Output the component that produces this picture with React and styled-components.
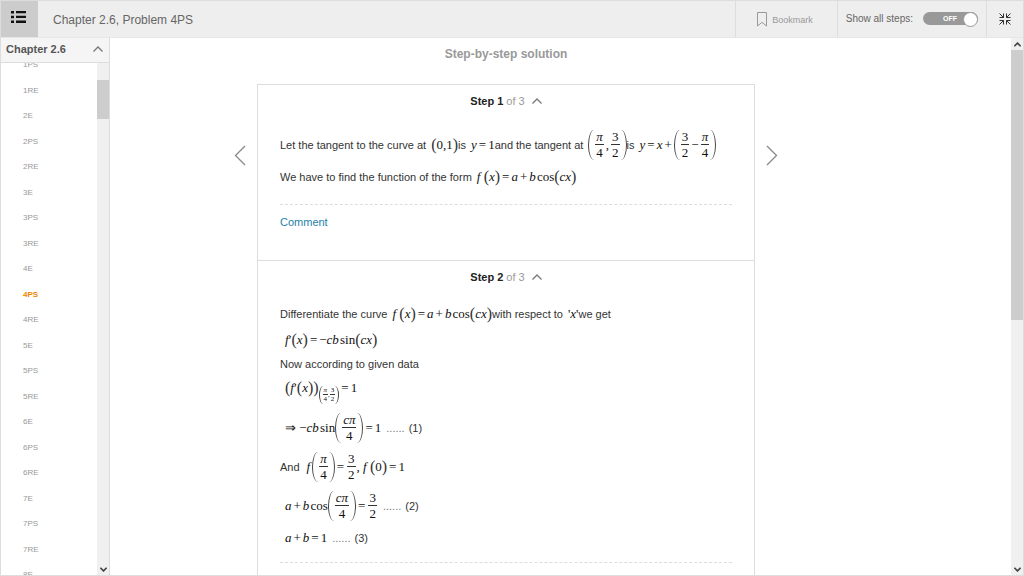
import { useState } from "react";
import styled, { createGlobalStyle, css } from "styled-components";

const GlobalStyle = createGlobalStyle`
  * {
    box-sizing: border-box;
  }

  body {
    margin: 0;
    background-color: #fff;
    color: #333;
    font-family: "Liberation Sans", Arial, sans-serif;
    font-size: 11px;
  }

  button {
    all: unset;
    box-sizing: border-box;
    cursor: pointer;
  }
`;

const Page = styled.div`
  display: flex;
  flex-direction: column;
  height: 100vh;
  overflow: hidden;
  border: 1px solid #ddd;
`;

const TopBar = styled.header`
  display: flex;
  flex: none;
  height: 37px;
  background-color: #eee;
  border-bottom: 1px solid #e6e6e6;
`;

const MenuButton = styled.button`
  display: flex;
  justify-content: center;
  width: 37px;
  padding: 10px 2px 0 0;
  background-color: #ccc;
`;

const Title = styled.h1`
  flex: 1;
  margin: 0;
  padding-left: 15px;
  font-size: 12px;
  font-weight: 400;
  line-height: 38px;
  color: #666;
`;

const BarCell = styled.div`
  display: flex;
  align-items: center;
  padding: 0 8px;
  border-left: 1px solid #ddd;
`;

const BookmarkButton = styled.button`
  display: flex;
  align-items: center;
  gap: 5px;
  padding: 1px 16px 0 13px;
  font-size: 9px;
  color: #999;
`;

const ToggleLabel = styled.label`
  padding-bottom: 2px;
  margin-right: 10px;
  font-size: 10px;
  color: #666;
`;

const Toggle = styled.span`
  position: relative;
  display: flex;
  margin-bottom: 1px;

  input {
    appearance: none;
    width: 55px;
    height: 13px;
    margin: 0;
    border-radius: 7px;
    background-color: #999;
    cursor: pointer;
  }

  &::after {
    content: "";
    position: absolute;
    top: 0;
    ${(props) => (props.$on ? "left: 0;" : "right: 0;")}
    width: 13px;
    height: 13px;
    border: 1px solid #999;
    border-radius: 50%;
    background-color: #fff;
    pointer-events: none;
  }
`;

const ToggleText = styled.span`
  position: absolute;
  top: 0;
  left: 20px;
  font-size: 7px;
  font-weight: 700;
  line-height: 13px;
  color: #fff;
  pointer-events: none;
`;

const ShrinkButton = styled.button`
  display: flex;
  padding: 0 4px;
`;

const Body = styled.div`
  display: flex;
  flex: 1;
  min-height: 0;
`;

const Sidebar = styled.nav`
  display: flex;
  flex-direction: column;
  flex: none;
  width: 109px;
  border-right: 1px solid #ddd;
`;

const ChapterButton = styled.button`
  display: flex;
  flex: none;
  align-items: center;
  justify-content: space-between;
  height: 25px;
  padding: 0 6px 2px 5px;
  border-bottom: 1px solid #ddd;
  background-color: #f5f5f5;
  font-weight: 700;
  color: #555;
`;

const SidebarScroll = styled.div`
  display: flex;
  flex: 1;
  min-height: 0;
`;

const ProblemWindow = styled.div`
  flex: 1;
  overflow: hidden;
`;

const ProblemList = styled.ul`
  margin: -10px 0 0;
  padding: 0;
  list-style: none;
`;

const ProblemItem = styled.li`
  height: 25px;
  padding-left: 22px;
  font-size: 8px;
  line-height: 24px;

  &:nth-child(odd) {
    height: 26px;
  }

  a {
    color: #999;
    text-decoration: none;

    ${(props) =>
      props.$active &&
      css`
        color: #f08700;
        font-weight: 700;
      `}
  }
`;

const Track = styled.div`
  display: flex;
  flex-direction: column;
  flex: none;
  align-items: center;
  width: 12px;
  padding-top: ${(props) => props.$offset || 0}px;
  background-color: #f0f0f0;
`;

const TrackArrow = styled.button`
  display: flex;
  align-items: center;
  justify-content: center;
  width: 100%;
  height: 12px;
`;

const Thumb = styled.div`
  width: 100%;
  height: ${(props) => props.$size};
  margin-bottom: auto;
  background-color: #cdcdcd;
`;

const Main = styled.main`
  flex: 1;
  min-width: 0;
  overflow: hidden;
  padding-right: 109px;
`;

const Heading = styled.h2`
  margin: 0;
  padding-bottom: 14px;
  font-size: 12px;
  line-height: 32px;
  text-align: center;
  color: #999;
`;

const Pager = styled.div`
  display: flex;
  align-items: flex-start;
  justify-content: center;
  gap: 11px;
`;

const PageButton = styled.button`
  display: flex;
  margin-top: 61px;
`;

const Steps = styled.div`
  flex: 0 1 498px;
  border: 1px solid #ddd;
`;

const StepSection = styled.section`
  & + & {
    border-top: 1px solid #ddd;
  }
`;

const StepButton = styled.button`
  display: flex;
  align-items: center;
  justify-content: center;
  width: 100%;
  height: 32px;
  padding-bottom: 1px;
  gap: 3px;
  color: #999;

  strong {
    color: #222;
  }

  svg {
    margin-left: 4px;
  }
`;

const StepBody = styled.div`
  display: flex;
  flex-direction: column;
  gap: 4px;
  margin: 0 22px;
  padding: 10px 0 ${(props) => (props.$last ? 13 : 16)}px;
  border-bottom: 1px dashed #ddd;
`;

const rowHeights = {
  text: 18,
  math: 22,
  sub: 29,
  tall: 35,
};

const Line = styled.div`
  display: flex;
  align-items: ${(props) => (props.$kind === "sub" ? "flex-start" : "center")};
  height: ${(props) => rowHeights[props.$kind || "text"]}px;
  white-space: nowrap;
`;

const Math = styled.span`
  display: flex;
  align-items: center;
  padding-left: ${(props) => (props.$flush ? 0 : 5)}px;
  font-family: "Liberation Serif", "Times New Roman", serif;
  font-size: 13px;
  line-height: 22px;
  color: #111;
`;

const Op = styled.span`
  padding: 0 2px;
`;

const Tight = styled.span`
  padding: 0 1px;
`;

const Round = styled.span`
  display: flex;
  align-items: center;

  &::before,
  &::after {
    font-size: 16px;
    color: #333;
  }

  &::before {
    content: "(";
  }

  &::after {
    content: ")";
  }
`;

// fences that stretch around a fraction
const TallRound = styled.span`
  display: flex;
  align-items: center;
  align-self: center;
  height: ${(props) => (props.$small ? 18 : 30)}px;
  line-height: 1;

  &::before,
  &::after {
    content: "";
    align-self: stretch;
    width: ${(props) => (props.$small ? 3 : 5)}px;
    border: 0 solid #444;
  }

  &::before {
    border-left-width: 1px;
    border-radius: 100% 0 0 100% / 50%;
  }

  &::after {
    border-right-width: 1px;
    border-radius: 0 100% 100% 0 / 50%;
  }
`;

const Fraction = styled.span`
  display: inline-flex;
  flex-direction: column;
  align-items: center;
  margin: 0 1px;
  line-height: 14px;

  span {
    padding: 0 1px;
  }

  span + span {
    border-top: 1px solid #333;
    padding-top: 1px;
    min-width: 100%;
    text-align: center;
  }
`;

const Subscript = styled.span`
  display: flex;
  padding-top: 9px;
  font-size: 7px;

  ${Fraction} {
    margin: 0;
    line-height: 7px;
  }
`;

const Note = styled.span`
  display: flex;
  gap: 4px;
  padding-left: 5px;
`;

const Dots = styled.span`
  color: #777;
`;

const CommentLink = styled.a`
  display: block;
  height: 55px;
  margin: 0 22px;
  line-height: 34px;
  color: #1f7fa8;
  text-decoration: none;
`;

const problems = [
  "1PS", "1RE", "2E", "2PS", "2RE", "3E", "3PS", "3RE", "4E", "4PS", "4RE",
  "5E", "5PS", "5RE", "6E", "6PS", "6RE", "7E", "7PS", "7RE", "8E",
];

function Chevron({ direction = "up", width = 10, height = 6, color = "#777", stroke = 1.3 }) {
  const paths = {
    up: "M0.5 5.5 L5 1 L9.5 5.5",
    down: "M0.5 0.5 L5 5 L9.5 0.5",
  };
  return (
    <svg width={width} height={height} viewBox="0 0 10 6" fill="none" stroke={color} strokeWidth={stroke}>
      <path d={paths[direction]} />
    </svg>
  );
}

function ListIcon() {
  return (
    <svg width="15" height="12" viewBox="0 0 15 12" fill="#111">
      <path d="M0 0h3v2.5H0zM0 4.7h3v2.5H0zM0 9.5h3V12H0zM5 0h10v2.3H5zM5 4.8h10v2.3H5zM5 9.6h10v2.3H5z" />
    </svg>
  );
}

function BookmarkIcon() {
  return (
    <svg width="10" height="15" viewBox="0 0 10 15" fill="none" stroke="#999">
      <path d="M0.5 0.5h9v13.5L5 10.3L0.5 14z" />
    </svg>
  );
}

function ShrinkIcon() {
  return (
    <svg width="12" height="12" viewBox="0 0 12 12" fill="none" stroke="#333">
      <path d="M0.5 0.5L4.5 4.5M0.5 4.5h4V0.5M11.5 0.5L7.5 4.5M7.5 0.5v4h4M0.5 11.5L4.5 7.5M0.5 7.5h4v4M11.5 11.5L7.5 7.5M7.5 11.5v-4h4" />
    </svg>
  );
}

function Arrow({ direction }) {
  return (
    <svg width="12" height="21" viewBox="0 0 12 21" fill="none" stroke="#888" strokeWidth="1.3">
      <path d={direction === "left" ? "M11 1L1.5 10.5L11 20" : "M1 1L10.5 10.5L1 20"} />
    </svg>
  );
}

function Frac({ top, bottom }) {
  return (
    <Fraction>
      <span>{top}</span>
      <span>{bottom}</span>
    </Fraction>
  );
}

function Fx({ arg = <i>x</i>, prime }) {
  return (
    <>
      <i>f</i>
      {prime ? "′" : "\u00a0"}
      <Round>{arg}</Round>
    </>
  );
}

function Curve() {
  return (
    <Math>
      <Fx />
      <Op>=</Op>
      <i>a</i>
      <Op>+</Op>
      <i>b</i>&#8202;cos
      <Round>
        <i>cx</i>
      </Round>
    </Math>
  );
}

function Equation({ number }) {
  return (
    <Note>
      <Dots>......</Dots>
      <span>({number})</span>
    </Note>
  );
}

function Step({ number, children, last }) {
  const [open, setOpen] = useState(true);

  return (
    <StepSection>
      <StepButton onClick={() => setOpen(!open)}>
        <strong>Step {number}</strong> of 3
        <Chevron direction={open ? "up" : "down"} />
      </StepButton>
      {open && (
        <>
          <StepBody $last={last}>{children}</StepBody>
          <CommentLink href="#comment">Comment</CommentLink>
        </>
      )}
    </StepSection>
  );
}

function App() {
  const [showAll, setShowAll] = useState(false);
  const pi = <i>π</i>;

  return (
    <Page>
      <GlobalStyle />
      <TopBar>
        <MenuButton aria-label="Table of contents">
          <ListIcon />
        </MenuButton>
        <Title>Chapter 2.6, Problem 4PS</Title>
        <BarCell>
          <BookmarkButton>
            <BookmarkIcon />
            Bookmark
          </BookmarkButton>
        </BarCell>
        <BarCell>
          <ToggleLabel htmlFor="show-all">Show all steps:</ToggleLabel>
          <Toggle $on={showAll}>
            <input
              id="show-all"
              type="checkbox"
              checked={showAll}
              onChange={() => setShowAll(!showAll)}
            />
            <ToggleText>{showAll ? "ON" : "OFF"}</ToggleText>
          </Toggle>
        </BarCell>
        <BarCell>
          <ShrinkButton aria-label="Exit full screen">
            <ShrinkIcon />
          </ShrinkButton>
        </BarCell>
      </TopBar>
      <Body>
        <Sidebar>
          <ChapterButton>
            Chapter 2.6
            <Chevron width={10} height={6} />
          </ChapterButton>
          <SidebarScroll>
            <ProblemWindow>
              <ProblemList>
                {problems.map((name) => (
                  <ProblemItem key={name} $active={name === "4PS"}>
                    <a href={`#${name}`}>{name}</a>
                  </ProblemItem>
                ))}
              </ProblemList>
            </ProblemWindow>
            <Track $offset={17}>
              <Thumb $size="39px" />
              <TrackArrow aria-label="Scroll problems down">
                <Chevron direction="down" width={7} height={5} color="#444" stroke={2.4} />
              </TrackArrow>
            </Track>
          </SidebarScroll>
        </Sidebar>
        <Main>
          <Heading>Step-by-step solution</Heading>
          <Pager>
            <PageButton aria-label="Previous problem">
              <Arrow direction="left" />
            </PageButton>
            <Steps>
              <Step number={1}>
                <Line $kind="tall">
                  <span>Let the tangent to the curve at</span>
                  <Math>
                    <Round>0,1</Round>
                  </Math>
                  <span>is</span>
                  <Math>
                    <i>y</i>
                    <Op>=</Op>1
                  </Math>
                  <span>and the tangent at</span>
                  <Math>
                    <TallRound>
                      <Frac top={pi} bottom="4" />
                      <Tight>,</Tight>
                      <Frac top="3" bottom="2" />
                    </TallRound>
                  </Math>
                  <span>is</span>
                  <Math>
                    <i>y</i>
                    <Op>=</Op>
                    <i>x</i>
                    <Op>+</Op>
                    <TallRound>
                      <Frac top="3" bottom="2" />
                      <Tight>−</Tight>
                      <Frac top={pi} bottom="4" />
                    </TallRound>
                  </Math>
                </Line>
                <Line $kind="math">
                  <span>We have to find the function of the form</span>
                  <Curve />
                </Line>
              </Step>
              <Step number={2} last>
                <Line $kind="math">
                  <span>Differentiate the curve</span>
                  <Curve />
                  <span>with respect to</span>
                  <Math>
                    '<i>x</i>'
                  </Math>
                  <span>we get</span>
                </Line>
                <Line $kind="math">
                  <Math>
                    <Fx prime />
                    <Op>=</Op>−<i>cb</i>&#8202;sin
                    <Round>
                      <i>cx</i>
                    </Round>
                  </Math>
                </Line>
                <Line>Now according to given data</Line>
                <Line $kind="sub">
                  <Math>
                    <Round>
                      <Fx prime />
                    </Round>
                  </Math>
                  <Math $flush>
                    <Subscript>
                      <TallRound $small>
                        <Frac top={pi} bottom="4" />,<Frac top="3" bottom="2" />
                      </TallRound>
                    </Subscript>
                  </Math>
                  <Math $flush>
                    <Op>=</Op>1
                  </Math>
                </Line>
                <Line $kind="tall">
                  <Math>
                    ⇒&nbsp;−<i>cb</i>&#8202;sin
                    <TallRound>
                      <Frac top={<i>cπ</i>} bottom="4" />
                    </TallRound>
                    <Op>=</Op>1
                  </Math>
                  <Equation number={1} />
                </Line>
                <Line $kind="tall">
                  <span>And</span>
                  <Math>
                    <Op>
                      <i>f</i>
                    </Op>
                    <TallRound>
                      <Frac top={pi} bottom="4" />
                    </TallRound>
                    <Op>=</Op>
                    <Frac top="3" bottom="2" />,&nbsp;
                    <Fx arg="0" />
                    <Op>=</Op>1
                  </Math>
                </Line>
                <Line $kind="tall">
                  <Math>
                    <i>a</i>
                    <Op>+</Op>
                    <i>b</i>&#8202;cos
                    <TallRound>
                      <Frac top={<i>cπ</i>} bottom="4" />
                    </TallRound>
                    <Op>=</Op>
                    <Frac top="3" bottom="2" />
                  </Math>
                  <Equation number={2} />
                </Line>
                <Line $kind="math">
                  <Math>
                    <i>a</i>
                    <Op>+</Op>
                    <i>b</i>
                    <Op>=</Op>1
                  </Math>
                  <Equation number={3} />
                </Line>
              </Step>
            </Steps>
            <PageButton aria-label="Next problem">
              <Arrow direction="right" />
            </PageButton>
          </Pager>
        </Main>
        <Track>
          <TrackArrow aria-label="Scroll up">
            <Chevron width={7} height={5} color="#444" stroke={2.4} />
          </TrackArrow>
          <Thumb $size="270px" />
          <TrackArrow aria-label="Scroll down">
            <Chevron direction="down" width={7} height={5} color="#444" stroke={2.4} />
          </TrackArrow>
        </Track>
      </Body>
    </Page>
  );
}

export default App;
